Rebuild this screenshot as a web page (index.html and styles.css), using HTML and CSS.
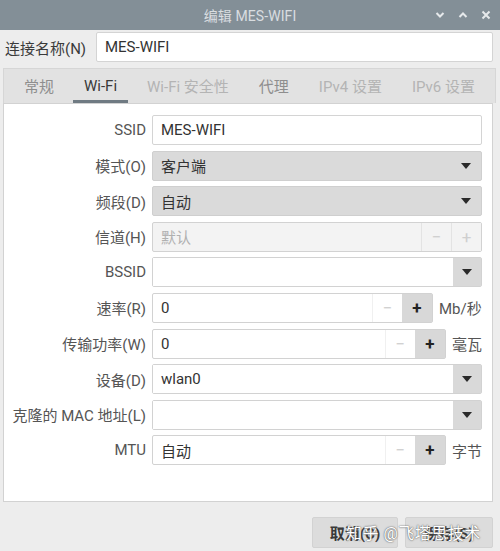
FILE: index.html
```html
<!DOCTYPE html>
<html>
<head>
<meta charset="utf-8">
<link rel="stylesheet" href="styles.css">
</head>
<body>
<div class="window">
  <div class="titlebar">
    <div class="title">编辑 MES-WIFI</div>
    <div class="wbtns">
      <svg width="12" height="12" viewBox="0 0 12 12"><path d="M2.5 4 L6 7.5 L9.5 4" fill="none" stroke="#e6e9eb" stroke-width="2"/></svg>
      <svg width="12" height="12" viewBox="0 0 12 12"><path d="M2.5 8 L6 4.5 L9.5 8" fill="none" stroke="#e6e9eb" stroke-width="2"/></svg>
      <svg width="12" height="12" viewBox="0 0 12 12"><path d="M2.5 2.5 L9.5 9.5 M9.5 2.5 L2.5 9.5" fill="none" stroke="#e6e9eb" stroke-width="2"/></svg>
    </div>
  </div>

  <div class="namerow">
    <span class="namelabel">连接名称(N)</span>
    <div class="entry name">MES-WIFI</div>
  </div>

  <div class="notebook">
    <div class="tabs">
      <span class="tab t-mid">常规</span>
      <span class="tab active">Wi-Fi</span>
      <span class="tab t-light">Wi-Fi 安全性</span>
      <span class="tab t-mid">代理</span>
      <span class="tab t-light">IPv4 设置</span>
      <span class="tab t-light">IPv6 设置</span>
    </div>
    <div class="panel">
      <div class="form">
        <label>SSID</label>
        <div class="entry">MES-WIFI</div>

        <label>模式(O)</label>
        <div class="combo"><span>客户端</span><i class="arrow"></i></div>

        <label>频段(D)</label>
        <div class="combo"><span>自动</span><i class="arrow"></i></div>

        <label>信道(H)</label>
        <div class="spin disabled full">
          <div class="spin-entry">默认</div>
          <div class="sbtn minus">−</div>
          <div class="sbtn plus">+</div>
        </div>

        <label>BSSID</label>
        <div class="ecombo"><div class="ec-entry"></div><div class="ec-btn"><i class="arrow"></i></div></div>

        <label>速率(R)</label>
        <div class="spinrow">
          <div class="spin w281">
            <div class="spin-entry">0</div>
            <div class="sbtn minus">−</div>
            <div class="sbtn plus">+</div>
          </div>
          <span class="unit">Mb/秒</span>
        </div>

        <label>传输功率(W)</label>
        <div class="spinrow">
          <div class="spin w294">
            <div class="spin-entry">0</div>
            <div class="sbtn minus">−</div>
            <div class="sbtn plus">+</div>
          </div>
          <span class="unit">毫瓦</span>
        </div>

        <label>设备(D)</label>
        <div class="ecombo"><div class="ec-entry">wlan0</div><div class="ec-btn"><i class="arrow"></i></div></div>

        <label>克隆的 MAC 地址(L)</label>
        <div class="ecombo"><div class="ec-entry"></div><div class="ec-btn"><i class="arrow"></i></div></div>

        <label>MTU</label>
        <div class="spinrow">
          <div class="spin w294">
            <div class="spin-entry">自动</div>
            <div class="sbtn minus">−</div>
            <div class="sbtn plus">+</div>
          </div>
          <span class="unit">字节</span>
        </div>
      </div>
    </div>
  </div>

  <div class="buttons">
    <div class="btn cancel">取消(C)</div>
    <div class="btn save">保存(S)</div>
    <div class="watermark">知乎 @飞塔思技术</div>
  </div>
</div>
</body>
</html>
```

FILE: styles.css
```css
* { box-sizing: border-box; }
html, body {
  margin: 0;
  padding: 0;
}
body {
  width: 500px;
  height: 551px;
  background: #ededed;
  font-family: Roboto, "Noto Sans CJK SC", sans-serif;
  font-size: 15px;
  color: #3a3a3a;
  overflow: hidden;
}
.window {
  width: 500px;
  height: 551px;
  display: flex;
  flex-direction: column;
}
.titlebar {
  height: 30px;
  background: #838f97;
  position: relative;
  display: flex;
  align-items: center;
  justify-content: center;
}
.title {
  color: #d9dde0;
  font-size: 14px;
  letter-spacing: 0.1px;
}
.wbtns {
  position: absolute;
  right: 8px;
  top: 9px;
  display: flex;
  gap: 11px;
}
.wbtns svg { display: block; }

.namerow {
  display: flex;
  align-items: center;
  padding: 2px 7px 0 5px;
  height: 32px;
}
.namelabel {
  width: 91px;
  color: #3a3a3a;
  white-space: nowrap;
}
.entry {
  height: 30px;
  background: #fff;
  border: 1px solid #d4d4d4;
  border-radius: 2px;
  display: flex;
  align-items: center;
  padding-left: 8px;
  color: #333;
}
.entry.name { flex: 1; height: 30px; }

.notebook {
  margin: 6px 4px 0 3px;
  display: flex;
  flex-direction: column;
}
.tabs {
  height: 35px;
  background: #e2e2e2;
  border: 1px solid #d6d6d6;
  border-bottom: none;
  display: flex;
  align-items: stretch;
  padding-left: 5px;
}
.tab {
  display: flex;
  align-items: center;
  padding: 2px 15px 0 15px;
  color: #8e8e8e;
  white-space: nowrap;
  border-bottom: 3px solid transparent;
}
.tab.t-light { color: #b4b4b4; }
.tab.active {
  color: #3a3a3a;
  border-bottom-color: #6f7a82;
  padding: 2px 11px 0 11px;
  margin: 0 4px;
}
.panel {
  height: 399px;
  background: #fff;
  border: 1px solid #d2d2d2;
  margin-right: 3px;
  padding: 11px 10px 0 0;
}
.form {
  display: grid;
  grid-template-columns: 142px 330px;
  column-gap: 6px;
  row-gap: 5.6px;
  grid-auto-rows: 30px;
}
.form label {
  text-align: right;
  align-self: center;
  color: #555;
  white-space: nowrap;
}
.combo {
  background: #dadada;
  border: 1px solid #cfcfcf;
  border-radius: 2px;
  display: flex;
  align-items: center;
  justify-content: space-between;
  padding: 0 10px 0 8px;
  color: #333;
}
.arrow {
  width: 0;
  height: 0;
  border-left: 5.5px solid transparent;
  border-right: 5.5px solid transparent;
  border-top: 6px solid #2a2a2a;
  display: block;
}
.ecombo {
  display: flex;
  border: 1px solid #d2d2d2;
  border-radius: 2px;
}
.ec-entry {
  flex: 1;
  background: #fff;
  display: flex;
  align-items: center;
  padding-left: 8px;
  color: #333;
}
.ec-btn {
  width: 28px;
  background: #d9d9d9;
  display: flex;
  align-items: center;
  justify-content: center;
}
.spinrow {
  display: flex;
  align-items: stretch;
  gap: 6px;
}
.spin {
  display: flex;
  border: 1px solid #d2d2d2;
  border-radius: 2px;
  background: #fff;
}
.spin.full { width: 330px; }
.spin.w281 { width: 281px; }
.spin.w294 { width: 294px; }
.spin-entry {
  flex: 1;
  display: flex;
  align-items: center;
  padding-left: 8px;
  color: #333;
}
.sbtn {
  width: 30px;
  display: flex;
  align-items: center;
  justify-content: center;
  font-size: 17px;
}
.sbtn.minus {
  color: #d0d0d0;
  border-left: 1px solid #f0f0f0;
}
.sbtn.plus {
  background: #d8d8d8;
  color: #222;
  font-weight: bold;
}
.spin.disabled {
  background: #f3f3f3;
}
.spin.disabled .spin-entry { color: #b0b0b0; }
.spin.disabled .sbtn.minus { border-left: 1px solid #e3e3e3; color: #cfcfcf; }
.spin.disabled .sbtn.plus {
  background: #f3f3f3;
  border-left: 1px solid #e3e3e3;
  color: #cfcfcf;
  font-weight: normal;
}
.unit {
  align-self: center;
  color: #555;
  white-space: nowrap;
}
.buttons {
  position: relative;
  display: flex;
  justify-content: flex-end;
  gap: 7px;
  padding: 15px 7px 0 0;
}
.btn {
  height: 31px;
  background: #dcdcdc;
  border: 1px solid #d2d2d2;
  border-radius: 2px;
  display: flex;
  align-items: center;
  justify-content: center;
  font-weight: bold;
  color: #3a3a3a;
}
.btn.cancel { width: 86px; }
.btn.save { width: 88px; }
.watermark {
  position: absolute;
  left: 346px;
  top: 18px;
  font-size: 16px;
  color: #ffffff;
  text-shadow: 0 0 1px #555, 0 0 2px #777;
  white-space: nowrap;
  letter-spacing: 0.5px;
}
```
